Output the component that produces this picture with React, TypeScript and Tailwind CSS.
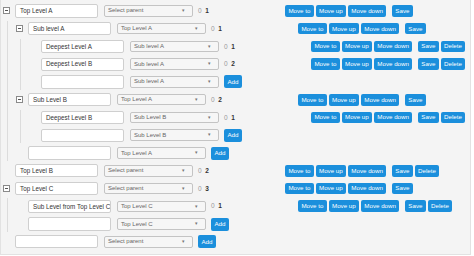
import React from 'react';

type Item = {
  name: string;
  parent: string;
  count: number;
  children?: Item[];
};

const tree: Item[] = [
  {
    name: 'Top Level A',
    parent: 'Select parent',
    count: 1,
    children: [
      {
        name: 'Sub level A',
        parent: 'Top Level A',
        count: 1,
        children: [
          { name: 'Deepest Level A', parent: 'Sub level A', count: 1 },
          { name: 'Deepest Level B', parent: 'Sub level A', count: 2 },
        ],
      },
      {
        name: 'Sub Level B',
        parent: 'Top Level A',
        count: 2,
        children: [{ name: 'Deepest Level B', parent: 'Sub Level B', count: 1 }],
      },
    ],
  },
  { name: 'Top Level B', parent: 'Select parent', count: 2 },
  {
    name: 'Top Level C',
    parent: 'Select parent',
    count: 3,
    children: [{ name: 'Sub Level from Top Level C', parent: 'Top Level C', count: 1 }],
  },
];

const Btn = ({ label, className = '' }: { label: string; className?: string }) => (
  <button className={`shrink-0 whitespace-nowrap h-[11.7px] px-[3.4px] rounded-[2px] bg-[#1b8fdc] text-white text-[6.2px] leading-none ${className}`}>
    {label}
  </button>
);

const Collapse = () => (
  <span className="relative block w-[7px] h-[7px] border border-[#8a8a8a] bg-white">
    <span className="absolute left-[1px] right-[1px] top-[2px] h-px bg-[#555]" />
  </span>
);

const Fields = ({ name, parent }: { name: string; parent: string }) => (
  <>
    <div className="shrink-0 w-[83px] h-[13.3px] border border-[#cfcfcf] rounded-[2px] bg-white px-[4px] flex items-center whitespace-nowrap overflow-hidden text-[6.3px] text-[#333]">
      {name}
    </div>
    <div className="shrink-0 ml-[6px] w-[89px] h-[11.5px] border border-[#c4c4c4] rounded-[2px] bg-[#f6f6f6] pl-[3px] pr-[7px] flex items-center justify-between whitespace-nowrap text-[6px] text-[#666]">
      <span>{parent}</span>
      <span className="text-[5px] text-[#777]">▾</span>
    </div>
  </>
);

const Row = ({ item }: { item: Item }) => {
  const hasKids = !!item.children;
  return (
    <div className="flex items-center h-[15.77px] mb-[2px]">
      <div className="shrink-0 w-[14px] flex pl-[2px]">{hasKids && <Collapse />}</div>
      <Fields name={item.name} parent={item.parent} />
      <div className="shrink-0 w-[92px] pl-[5px] flex items-center gap-[3.5px] text-[6.5px]">
        <span className="text-[#999]">0</span>
        <span className="text-[#333] font-bold">{item.count}</span>
      </div>
      <div className="shrink-0 flex items-center gap-[1.8px]">
        <Btn label="Move to" />
        <Btn label="Move up" />
        <Btn label="Move down" />
        <Btn label="Save" className="ml-[3.8px]" />
        {!hasKids && <Btn label="Delete" />}
      </div>
    </div>
  );
};

const AddRow = ({ parent }: { parent: string }) => (
  <div className="flex items-center h-[15.77px] mb-[2px]">
    <div className="shrink-0 w-[14px]" />
    <Fields name="" parent={parent} />
    <Btn label="Add" className="ml-[5px] h-[13px]" />
  </div>
);

const Branch = ({ items, addParent }: { items: Item[]; addParent: string }) => (
  <div>
    {items.map((item, i) => (
      <div key={i}>
        <Row item={item} />
        {item.children && (
          <div className="ml-[6px] pl-[6px] border-l border-[#dcdcdc]">
            <Branch items={item.children} addParent={item.name} />
          </div>
        )}
      </div>
    ))}
    <AddRow parent={addParent} />
  </div>
);

export default function App() {
  return (
    <div className="w-[474px] h-[256px] bg-white font-['Liberation_Sans',Arial,sans-serif]">
      <div className="w-[471px] overflow-hidden pt-[3px] pb-[2px] bg-[#f4f4f4] border-l border-r border-b border-[#e2e2e2]">
        <Branch items={tree} addParent="Select parent" />
      </div>
    </div>
  );
}
